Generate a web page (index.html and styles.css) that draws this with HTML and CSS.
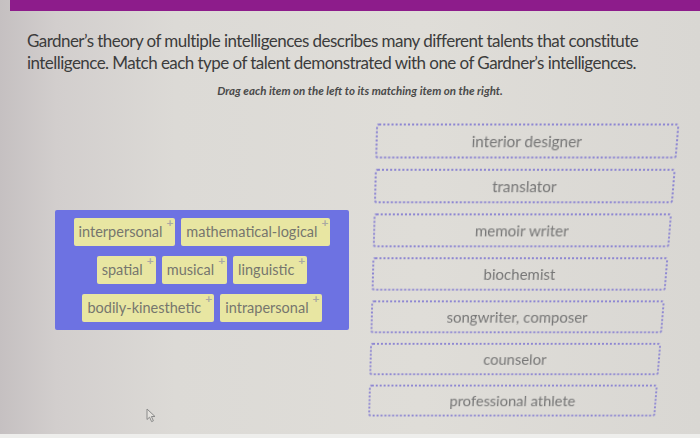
FILE: index.html
```html
<!DOCTYPE html>
<html lang="en">
<head>
    <meta charset="UTF-8">
    <meta name="viewport" content="width=device-width, initial-scale=1.0">
    <title>Multiple Intelligences Matching</title>
    <link rel="stylesheet" href="styles.css">
</head>
<body>
    <div class="topbar"></div>
    <div class="content">
        <p class="prompt">Gardner’s theory of multiple intelligences describes many different talents that constitute intelligence. Match each type of talent demonstrated with one of Gardner’s intelligences.</p>
        <p class="hint">Drag each item on the left to its matching item on the right.</p>

        <div class="board">
            <div class="bank">
                <div class="chip">interpersonal<span class="plus">+</span></div>
                <div class="chip">mathematical-logical<span class="plus">+</span></div>
                <div class="chip">spatial<span class="plus">+</span></div>
                <div class="chip">musical<span class="plus">+</span></div>
                <div class="chip">linguistic<span class="plus">+</span></div>
                <div class="chip">bodily-kinesthetic<span class="plus">+</span></div>
                <div class="chip">intrapersonal<span class="plus">+</span></div>
            </div>
            <div class="targets">
                <div class="target">interior designer</div>
                <div class="target">translator</div>
                <div class="target">memoir writer</div>
                <div class="target">biochemist</div>
                <div class="target">songwriter, composer</div>
                <div class="target">counselor</div>
                <div class="target">professional athlete</div>
            </div>
        </div>
    </div>

    <!-- mouse pointer -->
    <svg class="pointer" width="12" height="15" viewBox="0 0 12 15">
        <path d="M1 1 L1 11.5 L3.6 9.2 L5.6 13.6 L7.4 12.8 L5.4 8.5 L9 8.5 Z" fill="#e4e2de" stroke="#8a8a8a" stroke-width="1" stroke-linejoin="round"/>
    </svg>
    <div class="bottom-strip"></div>
</body>
</html>
```

FILE: styles.css
```css
body {
    margin: 0;
    height: 438px;
    overflow: hidden;
    position: relative;
    font-family: 'Lato', 'Open Sans', sans-serif;
    background: linear-gradient(to right, #c5c0c1 0%, #d2cecd 8%, #dcdad6 25%, #dfddd8 60%, #d9d7d3 100%);
    color: #3b3b3b;
}
.topbar {
    height: 11px;
    margin-left: 10px;
    background: #8d1c8b;
}
.content {
    padding: 19px 0 0 27px;
}
.prompt {
    margin: 0;
    width: 640px;
    font-size: 17px;
    line-height: 22px;
    letter-spacing: -0.55px;
    color: #3c3c3c;
}
.hint {
    margin: 10px 0 0;
    width: 666px;
    text-align: center;
    font-size: 11.5px;
    font-weight: bold;
    font-style: italic;
    color: #4a4a4a;
}
.board {
    display: flex;
    align-items: center;
    gap: 23px;
    margin-top: 28px;
    padding-left: 28px;
}
.bank {
    width: 294px;
    box-sizing: border-box;
    margin-bottom: 9px;
    padding: 8px 10px;
    background: #6d72e2;
    border-radius: 2px;
    display: flex;
    flex-wrap: wrap;
    justify-content: center;
    gap: 10px 6px;
}
.chip {
    position: relative;
    height: 28px;
    line-height: 28px;
    padding: 0 13px 0 5px;
    background: #e8e6a2;
    border-radius: 2px;
    font-size: 14.5px;
    color: #76766e;
}
.plus {
    position: absolute;
    top: -9px;
    right: 2px;
    font-size: 12px;
    font-weight: bold;
    color: #a9a9a2;
}
.targets {
    width: 295px;
    display: flex;
    flex-direction: column;
    gap: 10px;
    transform: perspective(1000px) rotateX(-10.7deg) skewX(-3.1deg);
}
.target {
    height: 30px;
    line-height: 30px;
    border: 2px dotted #8d86d2;
    border-radius: 3px;
    text-align: center;
    font-size: 15px;
    color: #767676;
}
.pointer {
    position: absolute;
    left: 146px;
    top: 408px;
}
.bottom-strip {
    position: absolute;
    left: 0;
    right: 0;
    bottom: 0;
    height: 4px;
    background: #eeeeec;
}
```
